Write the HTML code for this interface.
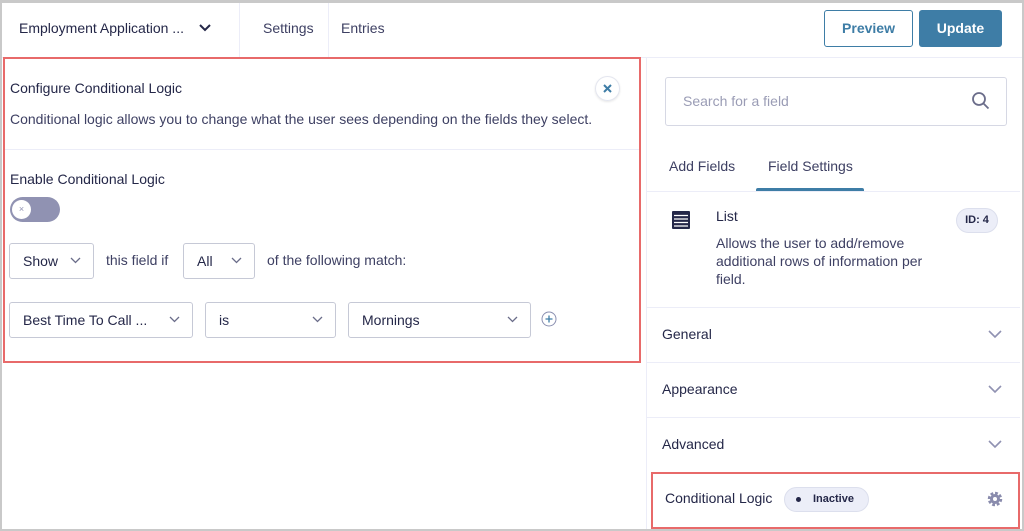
<!DOCTYPE html>
<html><head><meta charset="utf-8"><style>
*{box-sizing:border-box;margin:0;padding:0}
body{width:1024px;height:531px;overflow:hidden;background:#fff;font-family:"Liberation Sans",sans-serif;color:#242748;position:relative}
.frame{position:absolute;left:0;top:0;width:1024px;height:531px;border:2px solid #c9c9c9;border-top-width:3px}
.a{position:absolute}
.sel{position:absolute;border:1px solid #c6c9d6;border-radius:3px;height:36px;font-size:14px;line-height:34px;padding-left:13px;color:#242748}
.sel svg{position:absolute;right:12px;top:13px}
.row{position:absolute;left:647px;width:373px;border-top:1px solid #ecedf8;font-size:14px;}
.row span{position:absolute;left:15px;top:18px}
.row svg{position:absolute;right:18px;top:22px}
</style></head><body>
<div class="frame"></div>
<div class="a" style="left:2px;top:57px;width:1020px;height:1px;background:#ecedf8"></div>
<div class="a" style="left:239px;top:3px;width:1px;height:54px;background:#ecedf8"></div>
<div class="a" style="left:328px;top:3px;width:1px;height:54px;background:#ecedf8"></div>
<div class="a" style="left:19px;top:20px;font-size:14px">Employment Application ...</div>
<svg class="a" style="left:198px;top:23px" width="14" height="10" viewBox="0 0 14 10"><path d="M2 2l5 5 5-5" fill="none" stroke="#242748" stroke-width="2"/></svg>
<div class="a" style="left:263px;top:20px;font-size:14px;color:#3e4063">Settings</div>
<div class="a" style="left:341px;top:20px;font-size:14px;color:#3e4063">Entries</div>
<div class="a" style="left:824px;top:10px;width:89px;height:37px;border:1px solid #3e7da6;border-radius:3px;color:#3e7da6;font-size:14px;text-align:center;line-height:35px;font-weight:bold">Preview</div>
<div class="a" style="left:919px;top:10px;width:83px;height:37px;background:#3e7da6;border-radius:3px;color:#fff;font-size:14px;text-align:center;line-height:37px;font-weight:bold">Update</div>
<div class="a" style="left:3px;top:57px;width:638px;height:306px;border:2px solid #e86a6a"></div>
<div class="a" style="left:10px;top:80px;font-size:14px">Configure Conditional Logic</div>
<div class="a" style="left:595px;top:76px;width:25px;height:25px;border-radius:50%;border:1px solid #e4e6ef;box-shadow:0 1px 2px rgba(0,0,0,.1)"></div>
<svg class="a" style="left:601px;top:82px" width="13" height="13" viewBox="0 0 13 13"><path d="M3 3l7 7M10 3l-7 7" stroke="#3e7da6" stroke-width="2"/></svg>
<div class="a" style="left:10px;top:111px;font-size:14px;color:#3e4063">Conditional logic allows you to change what the user sees depending on the fields they select.</div>
<div class="a" style="left:5px;top:149px;width:634px;height:1px;background:#ecedf8"></div>
<div class="a" style="left:10px;top:171px;font-size:14px">Enable Conditional Logic</div>
<div class="a" style="left:10px;top:197px;width:50px;height:25px;border-radius:13px;background:#9092b2"></div>
<div class="a" style="left:12px;top:200px;width:19px;height:19px;border-radius:50%;background:#fff;font-size:9px;color:#9092b2;text-align:center;line-height:19px">×</div>
<div class="sel" style="left:9px;top:243px;width:85px">Show<svg width="11" height="8"><path d="M1 1l4.5 4.5L10 1" fill="none" stroke="#6b6d8a" stroke-width="1.3"/></svg></div>
<div class="a" style="left:106px;top:252px;font-size:14px;color:#3e4063">this field if</div>
<div class="sel" style="left:183px;top:243px;width:72px">All<svg width="11" height="8"><path d="M1 1l4.5 4.5L10 1" fill="none" stroke="#6b6d8a" stroke-width="1.3"/></svg></div>
<div class="a" style="left:267px;top:252px;font-size:14px;color:#3e4063">of the following match:</div>
<div class="sel" style="left:9px;top:302px;width:184px">Best Time To Call ...<svg width="11" height="8"><path d="M1 1l4.5 4.5L10 1" fill="none" stroke="#6b6d8a" stroke-width="1.3"/></svg></div>
<div class="sel" style="left:205px;top:302px;width:131px">is<svg width="11" height="8"><path d="M1 1l4.5 4.5L10 1" fill="none" stroke="#6b6d8a" stroke-width="1.3"/></svg></div>
<div class="sel" style="left:348px;top:302px;width:183px">Mornings<svg width="11" height="8"><path d="M1 1l4.5 4.5L10 1" fill="none" stroke="#6b6d8a" stroke-width="1.3"/></svg></div>
<svg class="a" style="left:541px;top:311px" width="16" height="16" viewBox="0 0 16 16"><circle cx="8" cy="8" r="7" fill="none" stroke="#8a8fb0"/><path d="M8 4.5v7M4.5 8h7" stroke="#3e7da6" stroke-width="1.3"/></svg>
<div class="a" style="left:646px;top:58px;width:1px;height:471px;background:#ecedf8"></div>
<div class="a" style="left:665px;top:77px;width:342px;height:49px;border:1px solid #d6d8e4;border-radius:3px"></div>
<div class="a" style="left:683px;top:93px;font-size:14px;color:#9a9cb5">Search for a field</div>
<svg class="a" style="left:971px;top:91px" width="20" height="20" viewBox="0 0 20 20"><circle cx="8" cy="8" r="6" fill="none" stroke="#6b6d8a" stroke-width="1.8"/><path d="M12.5 12.5l5 5" stroke="#6b6d8a" stroke-width="1.8"/></svg>
<div class="a" style="left:669px;top:158px;font-size:14px;color:#3e4063">Add Fields</div>
<div class="a" style="left:768px;top:158px;font-size:14px;color:#3e4063">Field Settings</div>
<div class="a" style="left:756px;top:188px;width:108px;height:3px;background:#3e7da6;border-radius:2px 2px 0 0"></div>
<div class="a" style="left:647px;top:191px;width:373px;height:1px;background:#ecedf8"></div>
<svg class="a" style="left:671px;top:210px" width="20" height="20" viewBox="0 0 20 20"><rect x="1" y="1" width="18" height="18" fill="#242748" rx="1"/><path d="M3 5.5h14M3 9h14M3 12.5h14M3 16h14" stroke="#fff" stroke-width="1.2"/></svg>
<div class="a" style="left:716px;top:208px;font-size:14px">List</div>
<div class="a" style="left:716px;top:234px;width:215px;font-size:14px;line-height:18px;color:#3e4063">Allows the user to add/remove additional rows of information per field.</div>
<div class="a" style="left:956px;top:208px;width:42px;height:25px;border-radius:13px;background:#eceef8;border:1px solid #dcdfed;font-size:11px;font-weight:bold;text-align:center;line-height:23px">ID: 4</div>
<div class="row" style="top:307px;height:55px"><span>General</span><svg width="14" height="9"><path d="M1 1l6 6 6-6" fill="none" stroke="#9092b2" stroke-width="1.6"/></svg></div>
<div class="row" style="top:362px;height:55px"><span>Appearance</span><svg width="14" height="9"><path d="M1 1l6 6 6-6" fill="none" stroke="#9092b2" stroke-width="1.6"/></svg></div>
<div class="row" style="top:417px;height:55px"><span>Advanced</span><svg width="14" height="9"><path d="M1 1l6 6 6-6" fill="none" stroke="#9092b2" stroke-width="1.6"/></svg></div>
<div class="a" style="left:651px;top:472px;width:369px;height:57px;border:2px solid #e86a6a"></div>
<div class="a" style="left:665px;top:490px;font-size:14px">Conditional Logic</div>
<div class="a" style="left:784px;top:487px;width:85px;height:25px;border-radius:13px;background:#eceef8;border:1px solid #dcdfed;font-size:11px;font-weight:bold;line-height:23px;padding-left:28px">Inactive</div>
<div class="a" style="left:796px;top:497px;width:5px;height:5px;border-radius:50%;background:#242748"></div>
<svg class="a" style="left:986px;top:490px" width="18" height="18" viewBox="0 0 18 18"><circle cx="9" cy="9" r="5.5" fill="none" stroke="#8a8cad" stroke-width="3.5" stroke-dasharray="2.6 1.7"/><circle cx="9" cy="9" r="5" fill="#8a8cad"/><circle cx="9" cy="9" r="2" fill="#fff"/></svg>
</body></html>
